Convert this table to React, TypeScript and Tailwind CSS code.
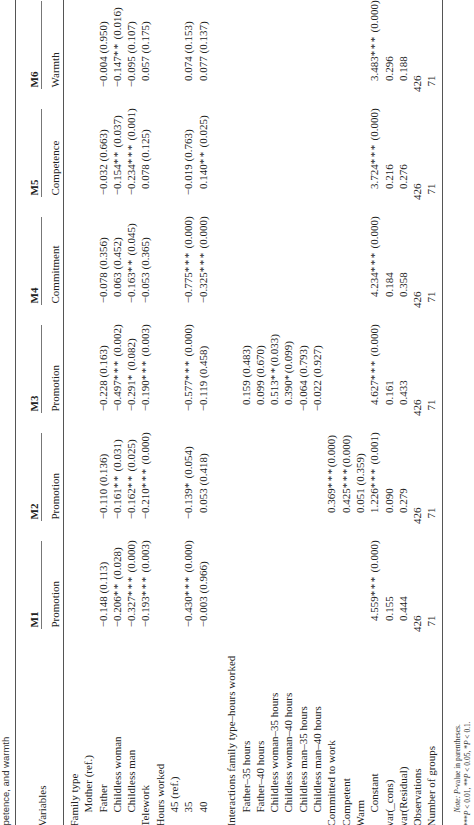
const models = [
  { m: "M1", sub: "Promotion" },
  { m: "M2", sub: "Promotion" },
  { m: "M3", sub: "Promotion" },
  { m: "M4", sub: "Commitment" },
  { m: "M5", sub: "Competence" },
  { m: "M6", sub: "Warmth" },
];

type Row = { label: string; indent?: boolean; vals?: string[]; blank?: boolean };

const rows: Row[] = [
  { label: "Family type" },
  { label: "Mother (ref.)", indent: true },
  { label: "Father", indent: true, vals: ["−0.148 (0.113)", "−0.110 (0.136)", "−0.228 (0.163)", "−0.078 (0.356)", "−0.032 (0.663)", "−0.004 (0.950)"] },
  { label: "Childless woman", indent: true, vals: ["−0.206** (0.028)", "−0.161** (0.031)", "−0.497*** (0.002)", "0.063 (0.452)", "−0.154** (0.037)", "−0.147** (0.016)"] },
  { label: "Childless man", indent: true, vals: ["−0.327*** (0.000)", "−0.162** (0.025)", "−0.291* (0.082)", "−0.163** (0.045)", "−0.234*** (0.001)", "−0.095 (0.107)"] },
  { label: "Telework", vals: ["−0.193*** (0.003)", "−0.210*** (0.000)", "−0.190*** (0.003)", "−0.053 (0.365)", "0.078 (0.125)", "0.057 (0.175)"] },
  { label: "Hours worked" },
  { label: "45 (ref.)", indent: true },
  { label: "35", indent: true, vals: ["−0.430*** (0.000)", "−0.139* (0.054)", "−0.577*** (0.000)", "−0.775*** (0.000)", "−0.019 (0.763)", "0.074 (0.153)"] },
  { label: "40", indent: true, vals: ["−0.003 (0.966)", "0.053 (0.418)", "−0.119 (0.458)", "−0.325*** (0.000)", "0.140** (0.025)", "0.077 (0.137)"] },
  { label: "", blank: true },
  { label: "Interactions family type–hours worked" },
  { label: "Father–35 hours", indent: true, vals: ["", "", "0.159 (0.483)", "", "", ""] },
  { label: "Father–40 hours", indent: true, vals: ["", "", "0.099 (0.670)", "", "", ""] },
  { label: "Childless woman–35 hours", indent: true, vals: ["", "", "0.513**(0.033)", "", "", ""] },
  { label: "Childless woman–40 hours", indent: true, vals: ["", "", "0.390*(0.099)", "", "", ""] },
  { label: "Childless man–35 hours", indent: true, vals: ["", "", "−0.064 (0.793)", "", "", ""] },
  { label: "Childless man–40 hours", indent: true, vals: ["", "", "−0.022 (0.927)", "", "", ""] },
  { label: "Committed to work", vals: ["", "0.369***(0.000)", "", "", "", ""] },
  { label: "Competent", vals: ["", "0.425***(0.000)", "", "", "", ""] },
  { label: "Warm", vals: ["", "0.051 (0.359)", "", "", "", ""] },
  { label: "Constant", indent: true, vals: ["4.559*** (0.000)", "1.226*** (0.001)", "4.627*** (0.000)", "4.234*** (0.000)", "3.724*** (0.000)", "3.483*** (0.000)"] },
  { label: "var(_cons)", vals: ["0.155", "0.090", "0.161", "0.184", "0.216", "0.296"] },
  { label: "var(Residual)", vals: ["0.444", "0.279", "0.433", "0.358", "0.276", "0.188"] },
  { label: "Observations", vals: ["426", "426", "426", "426", "426", "426"] },
  { label: "Number of groups", vals: ["71", "71", "71", "71", "71", "71"] },
];

// splits "−0.206** (0.028)" into whole part, decimals, stars and p-value
function Val({ v }: { v: string }) {
  if (!v) return <div />;
  const m = v.match(/^([^.]+)(\.\d+)?(\**)(.*)$/);
  const whole = m ? m[1] : v;
  const dec = m?.[2] ?? "";
  const stars = m?.[3] ?? "";
  const rest = m?.[4] ?? "";
  return (
    <div className="flex whitespace-pre">
      <span className="flex w-[12px] shrink-0 justify-end">{whole}</span>
      <span>{dec}</span>
      {stars && <span className="tracking-[1.5px]">{stars}</span>}
      <span>{rest}</span>
    </div>
  );
}

export default function App() {
  return (
    <div className="h-[825px] w-[474px] overflow-hidden bg-white">
      <div className="h-[474px] w-[825px] origin-top-left [transform:translateY(825px)_rotate(-90deg)]">
        <div className="-ml-[1.5px] w-[848px] font-['Liberation_Serif',serif] text-[11px] text-[#222]">
          <div className="h-[15px] pl-[1px] font-['Liberation_Sans',sans-serif] text-[9.5px] leading-[11px] text-[#333]">
            petence, and warmth
          </div>

          <div className="grid grid-cols-[199px_repeat(6,108px)] border-t border-b border-[#555]">
            <div className="row-span-2 flex items-center pt-[5px] leading-[14px]">Variables</div>
            {models.map((c) => (
              <div key={c.m} className="h-[25px] pt-[11px]">
                <div className="-ml-[2px] w-[88px] border-b border-[#777] pl-[2px] leading-[14px] font-bold">
                  {c.m}
                </div>
              </div>
            ))}
            {models.map((c) => (
              <div key={c.m + "s"} className="h-[22px] pt-[7px] leading-[14px]">
                {c.sub}
              </div>
            ))}
          </div>

          <div className="grid grid-cols-[199px_repeat(6,108px)] border-b border-[#555] pt-[3px] pb-[3px] leading-[14.3px]">
            {rows.map((r, idx) =>
              r.blank ? (
                <div key={idx} className="col-span-7 h-[14.3px]" />
              ) : (
                <div key={idx} className="contents">
                  <div className={r.indent ? "h-[14.3px] whitespace-nowrap pl-[14px]" : "h-[14.3px] whitespace-nowrap"}>
                    {r.label}
                  </div>
                  {(r.vals ?? ["", "", "", "", "", ""]).map((v, j) => (
                    <div key={j} className="h-[14.3px]">
                      <Val v={v} />
                    </div>
                  ))}
                </div>
              )
            )}
          </div>

          <div className="pt-[10px] text-[7.5px] leading-[10px] text-[#333]">
            <div className="pl-[14px]">
              <i>Note: P</i>-value in parentheses.
            </div>
            <div>
              ***<i>P</i> &lt; 0.01, **<i>P</i> &lt; 0.05, *<i>P</i> &lt; 0.1.
            </div>
          </div>
        </div>
      </div>
    </div>
  );
}
